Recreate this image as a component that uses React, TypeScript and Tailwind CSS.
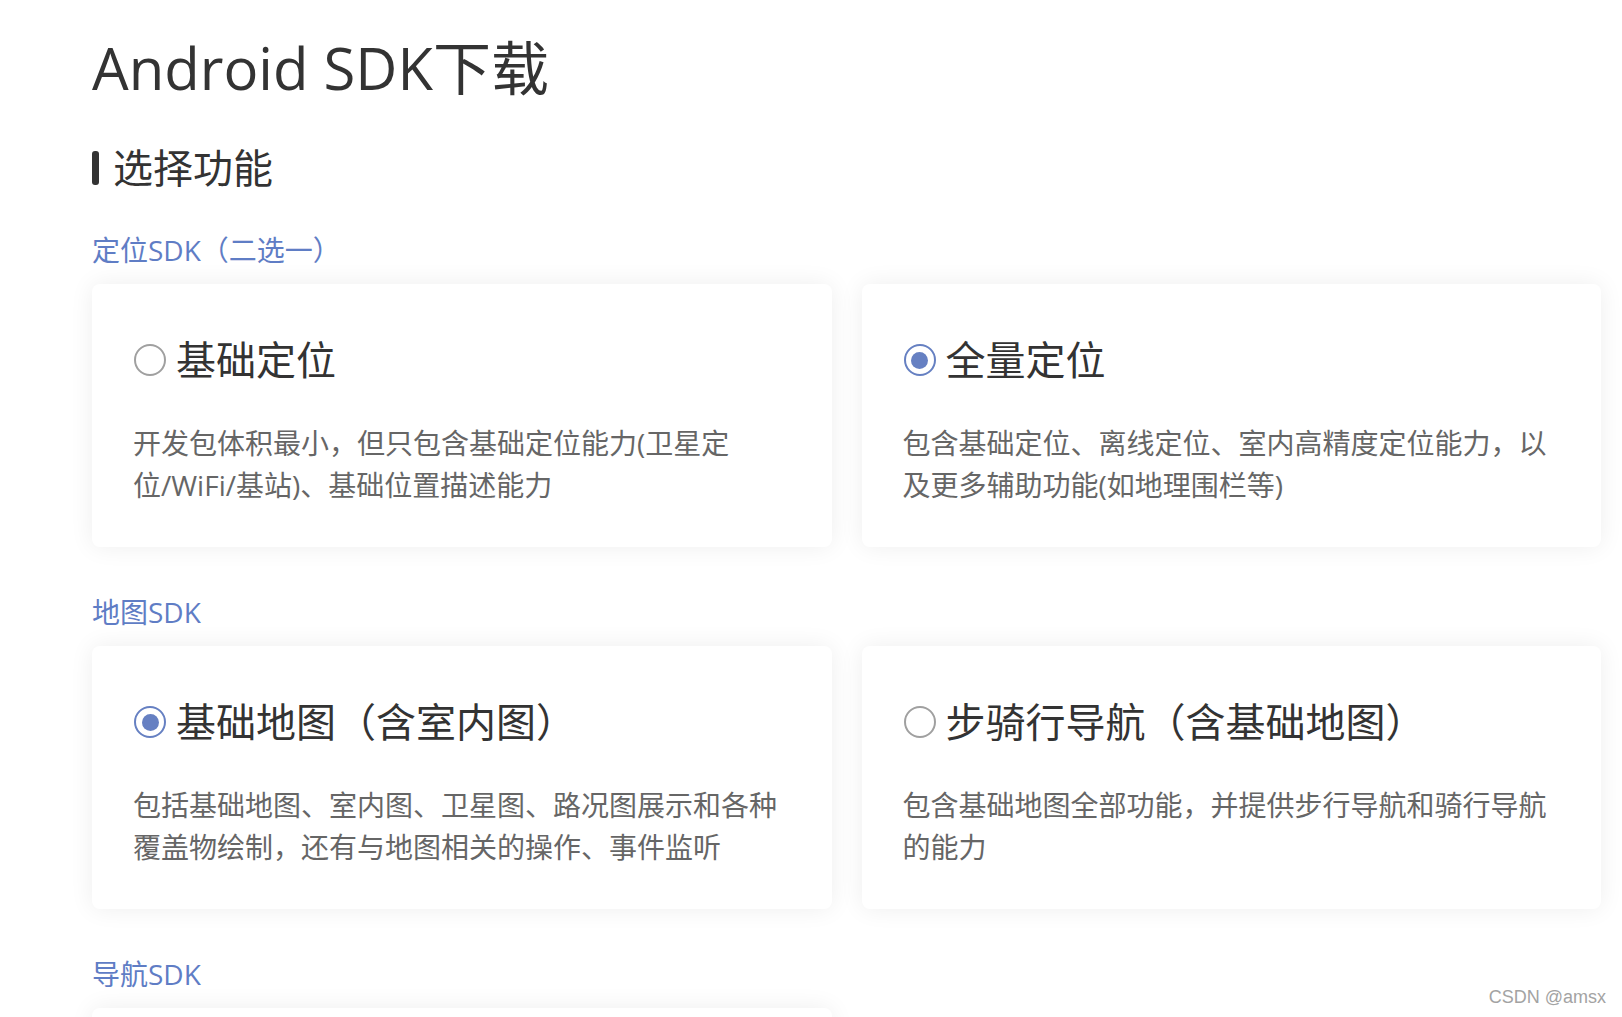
import React from "react";

type Option = {
  title: string;
  desc: string;
  checked: boolean;
};

type Group = {
  label: string;
  options: Option[];
};

const groups: Group[] = [
  {
    label: "定位SDK（二选一）",
    options: [
      {
        title: "基础定位",
        desc: "开发包体积最小，但只包含基础定位能力(卫星定位/WiFi/基站)、基础位置描述能力",
        checked: false,
      },
      {
        title: "全量定位",
        desc: "包含基础定位、离线定位、室内高精度定位能力，以及更多辅助功能(如地理围栏等)",
        checked: true,
      },
    ],
  },
  {
    label: "地图SDK",
    options: [
      {
        title: "基础地图（含室内图）",
        desc: "包括基础地图、室内图、卫星图、路况图展示和各种覆盖物绘制，还有与地图相关的操作、事件监听",
        checked: true,
      },
      {
        title: "步骑行导航（含基础地图）",
        desc: "包含基础地图全部功能，并提供步行导航和骑行导航的能力",
        checked: false,
      },
    ],
  },
];

function Radio({ checked }: { checked: boolean }) {
  return (
    <span
      className={`flex items-center justify-center w-8 h-8 shrink-0 rounded-full border-2 ${
        checked ? "border-[#6680c2]" : "border-[#a0a0a0]"
      }`}
    >
      {checked && <span className="w-[17px] h-[17px] rounded-full bg-[#6680c2]" />}
    </span>
  );
}

function OptionCard({ option }: { option: Option }) {
  return (
    <div className="bg-white rounded-lg shadow-[0_0_24px_rgba(0,0,0,0.07)] pt-12 pb-[41px] pl-[42px] pr-[40px] h-[263px]">
      {/* title row */}
      <div className="flex items-center gap-[10px] h-14">
        <Radio checked={option.checked} />
        <span className="text-[40px] leading-[56px] text-[#333]">{option.title}</span>
      </div>
      <p className="mt-[34px] -ml-px text-[28px] leading-[42px] text-[#666]">
        {option.desc}
      </p>
    </div>
  );
}

export default function App() {
  return (
    <div
      className="relative h-[1017px] overflow-hidden bg-white pl-[92px] pr-[21px]"
      style={{ fontFamily: '"Open Sans", "Noto Sans CJK SC", sans-serif' }}
    >
      {/* Header */}
      <h1 className="pt-[28px] text-[58px] leading-[80px] text-[#333] font-normal">
        Android SDK下载
      </h1>

      {/* Section title */}
      <div className="flex items-center gap-[14px] mt-[40px] h-[40px]">
        <span className="w-[7px] h-[34px] rounded-[3px] bg-[#333]" />
        <span className="text-[40px] leading-[40px] text-[#333]">选择功能</span>
      </div>

      {groups.map((group, i) => (
        <div key={group.label} className={i === 0 ? "mt-[42px]" : "mt-[45px]"}>
          <div className="text-[28px] leading-[40px] text-[#5f7dc5]">{group.label}</div>
          <div className="grid grid-cols-2 gap-[30px] mt-[14px]">
            {group.options.map((opt) => (
              <OptionCard key={opt.title} option={opt} />
            ))}
          </div>
        </div>
      ))}

      {/* 导航SDK: only the top edge of its card is in view */}
      <div className="mt-[45px]">
        <div className="text-[28px] leading-[40px] text-[#5f7dc5]">导航SDK</div>
        <div className="grid grid-cols-2 gap-[30px] mt-[14px]">
          <div className="bg-white rounded-lg shadow-[0_0_24px_rgba(0,0,0,0.07)] h-[263px]" />
        </div>
      </div>

      {/* watermark */}
      <div
        className="absolute right-[16px] bottom-[6px] text-[18px] text-[#a3a3a3]"
        style={{ fontFamily: '"Liberation Sans", Arial, sans-serif' }}
      >
        CSDN @amsx
      </div>
    </div>
  );
}
